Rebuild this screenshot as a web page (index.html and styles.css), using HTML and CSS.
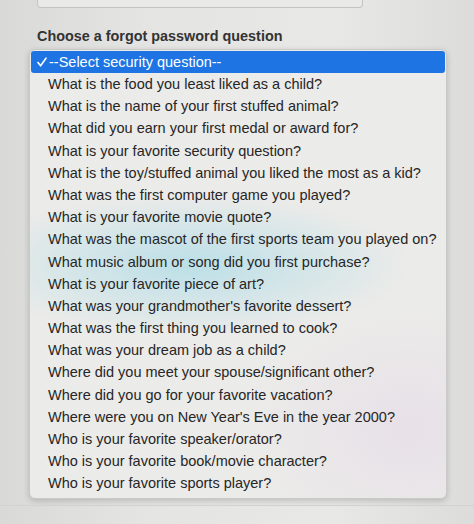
FILE: index.html
```html
<!DOCTYPE html>
<html lang="en">
<head>
    <meta charset="UTF-8">
    <meta name="viewport" content="width=device-width, initial-scale=1.0">
    <title>Forgot password question</title>
    <link rel="stylesheet" href="styles.css">
</head>
<body>
    <div class="page">
        <div class="field-above"></div>
        <label class="question-label" for="questionMenu">Choose a forgot password question</label>
        <div id="questionMenu" class="select-menu">
            <div class="option selected">
                <svg class="check" width="10" height="10" viewBox="0 0 10 10">
                    <polyline points="1,5.5 3.6,8.8 9,1.2" fill="none" stroke="#fff" stroke-width="1.6" stroke-linecap="round" stroke-linejoin="round"/>
                </svg>--Select security question--
            </div>
            <div class="option">What is the food you least liked as a child?</div>
            <div class="option">What is the name of your first stuffed animal?</div>
            <div class="option">What did you earn your first medal or award for?</div>
            <div class="option">What is your favorite security question?</div>
            <div class="option">What is the toy/stuffed animal you liked the most as a kid?</div>
            <div class="option">What was the first computer game you played?</div>
            <div class="option">What is your favorite movie quote?</div>
            <div class="option">What was the mascot of the first sports team you played on?</div>
            <div class="option">What music album or song did you first purchase?</div>
            <div class="option">What is your favorite piece of art?</div>
            <div class="option">What was your grandmother's favorite dessert?</div>
            <div class="option">What was the first thing you learned to cook?</div>
            <div class="option">What was your dream job as a child?</div>
            <div class="option">Where did you meet your spouse/significant other?</div>
            <div class="option">Where did you go for your favorite vacation?</div>
            <div class="option">Where were you on New Year's Eve in the year 2000?</div>
            <div class="option">Who is your favorite speaker/orator?</div>
            <div class="option">Who is your favorite book/movie character?</div>
            <div class="option">Who is your favorite sports player?</div>
        </div>
        <div class="bottom-rule"></div>
    </div>
</body>
</html>
```

FILE: styles.css
```css
body {
    margin: 0;
    background-color: #e3e3e1;
    font-family: "Liberation Sans", Arial, sans-serif;
    color: #262626;
}
.page {
    width: 474px;
    height: 524px;
    overflow: hidden;
    background: linear-gradient(90deg, #d9d9d7 0%, #e4e4e2 30%, #e8e8e6 70%, #dcdcda 100%);
}
.field-above {
    margin-left: 37px;
    width: 324px;
    height: 7px;
    border: 1px solid #c4c4c2;
    border-top: none;
    border-radius: 0 0 4px 4px;
    background-color: #e9e9e7;
}
.question-label {
    display: block;
    margin: 20px 0 0 37px;
    font-size: 14.4px;
    font-weight: bold;
    line-height: 17px;
    color: #333;
}
.select-menu {
    margin: 4px 0 0 29px;
    width: 416px;
    height: 447px;
    padding-top: 1px;
    border: 1px solid #c9c9c7;
    border-radius: 6px;
    background: radial-gradient(ellipse 220px 70px at 160px 215px, rgba(140, 212, 230, 0.5), rgba(140, 212, 230, 0) 100%),
                radial-gradient(ellipse 160px 120px at 380px 380px, rgba(225, 205, 230, 0.35), rgba(225, 205, 230, 0) 100%),
                #ebebe9;
    box-shadow: 0 2px 6px rgba(0, 0, 0, 0.18);
}
.option {
    height: 22.2px;
    padding-left: 18px;
    font-size: 14.5px;
    line-height: 22px;
    white-space: nowrap;
}
.option.selected {
    position: relative;
    height: 22px;
    margin: 0 1px 0 1px;
    border-radius: 3px;
    background-color: #1d74e2;
    color: #fff;
}
.check {
    position: absolute;
    left: 6px;
    top: 6px;
}
.bottom-rule {
    margin-top: 6px;
    height: 1px;
    background-color: #d2d2d0;
}
```
